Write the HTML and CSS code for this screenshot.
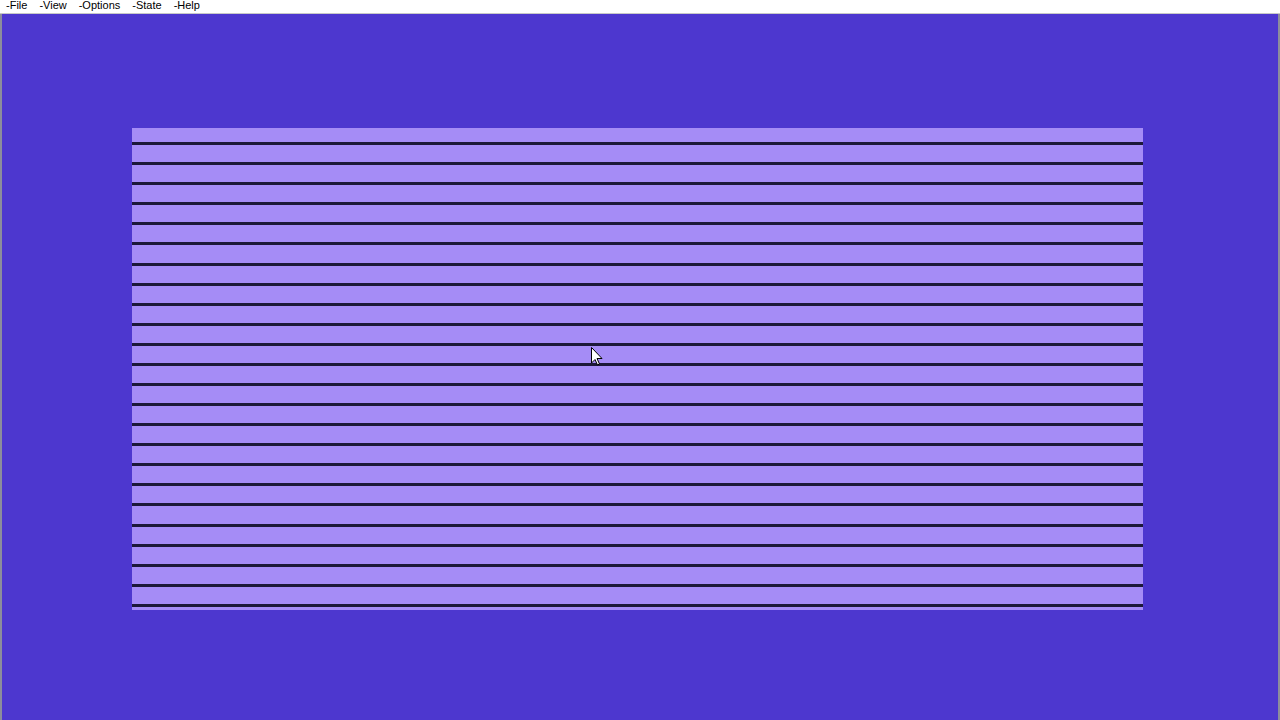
FILE: index.html
```html
<!DOCTYPE html>
<html>
<head>
<meta charset="utf-8">
<link rel="stylesheet" href="styles.css">
</head>
<body>
<div class="menubar">
  <span class="item">-File</span>
  <span class="item">-View</span>
  <span class="item">-Options</span>
  <span class="item">-State</span>
  <span class="item">-Help</span>
</div>
<div class="screen">
  <div class="panel">
    <div class="row"></div><div class="row"></div><div class="row"></div><div class="row"></div>
    <div class="row"></div><div class="row"></div><div class="row"></div><div class="row"></div>
    <div class="row"></div><div class="row"></div><div class="row"></div><div class="row"></div>
    <div class="row"></div><div class="row"></div><div class="row"></div><div class="row"></div>
    <div class="row"></div><div class="row"></div><div class="row"></div><div class="row"></div>
    <div class="row"></div><div class="row"></div><div class="row"></div><div class="row"></div>
  </div>
  <svg class="cursor" width="12" height="19" viewBox="0 0 12 19">
    <path d="M0.5 0.5 L0.5 16 L4 12.5 L6.5 18 L8.5 17 L6 11.5 L11 11.5 Z" fill="#ffffff" stroke="#000000" stroke-width="1" stroke-linejoin="miter"/>
  </svg>
</div>
</body>
</html>
```

FILE: styles.css
```css
html, body {
  margin: 0;
  padding: 0;
  width: 1280px;
  height: 720px;
  overflow: hidden;
  background: #ffffff;
}

.menubar {
  height: 13px;
  border-bottom: 1px solid #c8c8c8;
  background: #ffffff;
  display: flex;
  gap: 12px;
  padding-left: 6px;
  overflow: hidden;
  font-family: "Liberation Sans", Arial, sans-serif;
  font-size: 11px;
  color: #000000;
}

.item {
  line-height: 11px;
  margin-top: 0;
  white-space: nowrap;
}

.screen {
  position: relative;
  height: 706px;
  background: #4d37cf;
  border-left: 2px solid #8c8c9c;
  border-right: 2px solid #8c8c9c;
  padding: 114px 0 0 130px;
  box-sizing: border-box;
}

.panel {
  width: 1011px;
  height: 482px;
  display: flex;
  flex-direction: column;
  background: #a58cf6;
}

.row {
  flex: 1;
  box-sizing: border-box;
  border-bottom: 3px solid #a58cf6;
  position: relative;
}

.row::after {
  content: "";
  position: absolute;
  left: 0;
  right: 0;
  bottom: 0;
  height: 3px;
  background: #1c1838;
}

.cursor {
  position: absolute;
  left: 589px;
  top: 333px;
}
```
